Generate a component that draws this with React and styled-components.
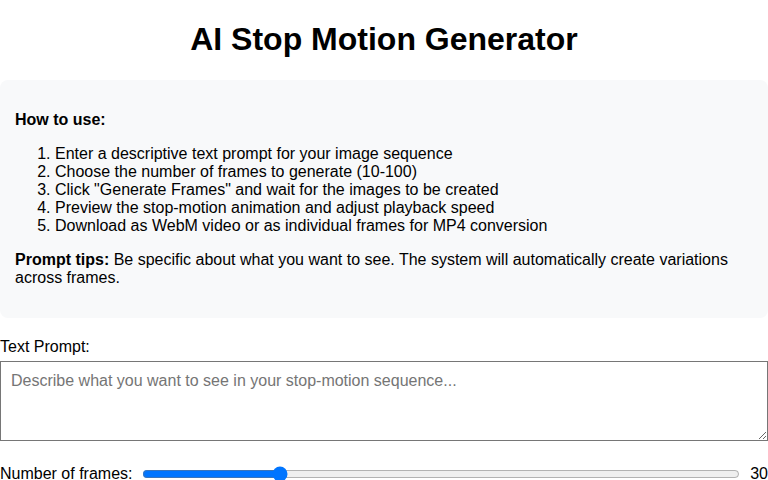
import React, { useState } from 'react';
import styled, { createGlobalStyle } from 'styled-components';

const GlobalStyle = createGlobalStyle`
  body {
    margin: 0;
    font-family: "Liberation Sans", Arial, sans-serif;
    color: #000;
    background: #fff;
  }
`;

const Page = styled.div`
  width: 100%;
`;

const Title = styled.h1`
  text-align: center;
  font-size: 32px;
  margin: 0.67em 0;
`;

const InfoBox = styled.div`
  background-color: #f8f9fa;
  border-radius: 8px;
  padding: 15px;
  font-size: 16px;

  p {
    margin: 16px 0;
  }

  ol {
    margin: 16px 0;
    padding-left: 40px;
  }
`;

const FormGroup = styled.div`
  margin-top: ${(p) => p.$top || 20}px;
  margin-bottom: 20px;
`;

const Label = styled.label`
  display: block;
  margin-bottom: 5px;
`;

const Prompt = styled.textarea`
  display: block;
  box-sizing: border-box;
  width: 100%;
  height: 80px;
  margin: 0;
  padding: 10px;
  border: 1px solid #767676;
  font-family: "Liberation Sans", Arial, sans-serif;
  font-size: 16px;
  resize: vertical;

  &::placeholder {
    color: #757575;
  }
`;

const SliderRow = styled.div`
  display: flex;
  align-items: center;
  gap: 10px;
`;

const Range = styled.input`
  flex: 1;
  margin: 0;
`;

const App = () => {
  const [frames, setFrames] = useState(30);

  return (
    <Page>
      <GlobalStyle />
      <Title>AI Stop Motion Generator</Title>
      <InfoBox>
        <p><strong>How to use:</strong></p>
        <ol>
          <li>Enter a descriptive text prompt for your image sequence</li>
          <li>Choose the number of frames to generate (10-100)</li>
          <li>Click "Generate Frames" and wait for the images to be created</li>
          <li>Preview the stop-motion animation and adjust playback speed</li>
          <li>Download as WebM video or as individual frames for MP4 conversion</li>
        </ol>
        <p>
          <strong>Prompt tips:</strong> Be specific about what you want to see. The system will
          automatically create variations across frames.
        </p>
      </InfoBox>
      <FormGroup>
        <Label htmlFor="prompt">Text Prompt:</Label>
        <Prompt id="prompt" placeholder="Describe what you want to see in your stop-motion sequence..." />
      </FormGroup>
      <FormGroup $top={24}>
        <SliderRow>
          <label htmlFor="frames">Number of frames:</label>
          <Range
            id="frames"
            type="range"
            min="10"
            max="100"
            value={frames}
            onChange={(e) => setFrames(Number(e.target.value))}
          />
          <span>{frames}</span>
        </SliderRow>
      </FormGroup>
    </Page>
  );
};

export default App;
